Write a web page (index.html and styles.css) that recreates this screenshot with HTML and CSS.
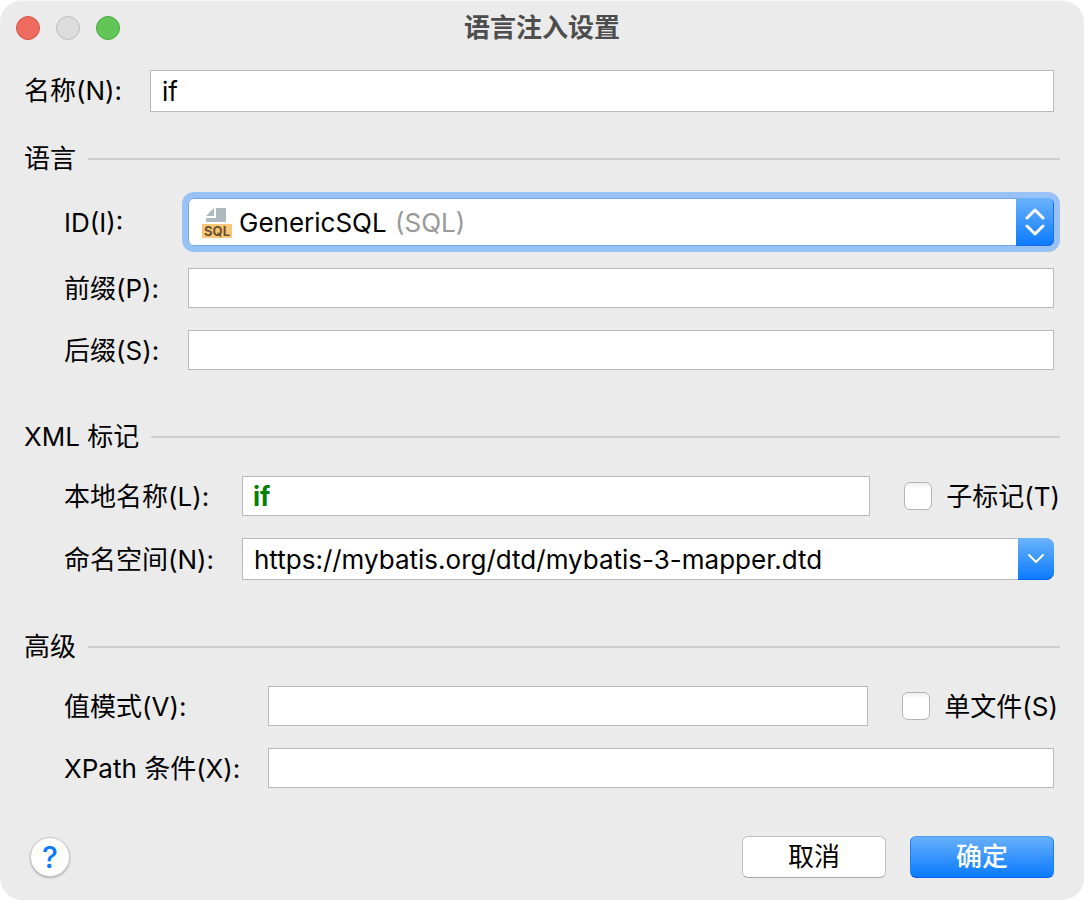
FILE: index.html
```html
<!DOCTYPE html>
<html lang="zh-CN">
    <head>
        <meta charset="utf-8" />
        <title>语言注入设置</title>
        <link rel="stylesheet" href="styles.css">
    </head>
    <body>
        <form class="dialog">
            <header class="titlebar">
                <div class="lights">
                    <span class="light close"></span>
                    <span class="light minimize"></span>
                    <span class="light maximize"></span>
                </div>
                <h1 class="title">语言注入设置</h1>
            </header>

            <div class="row name-row">
                <label for="name">名称(N):</label>
                <input class="field tall" id="name" type="text" value="if">
            </div>

            <section class="group language">
                <h2 class="heading">语言</h2>
                <div class="row">
                    <label for="language">ID(I):</label>
                    <div class="select-box">
                        <svg class="sql-icon" viewBox="0 0 30 32" aria-hidden="true">
                            <path d="M4 9 L12 1 V9 Z M14 1 H24 V15 H4 V11 H14 Z" fill="#aeb9c0"/>
                            <rect y="17" width="30" height="14" fill="#f9c778"/>
                            <text class="sql-text" x="15" y="29" text-anchor="middle">SQL</text>
                        </svg>
                        <select class="select" id="language">
                            <option>GenericSQL</option>
                        </select>
                        <span class="hint">(SQL)</span>
                        <span class="arrow">
                            <svg width="20" height="28" viewBox="0 0 20 28">
                                <path d="M2 10 L10 2 L18 10 M2 18 L10 26 L18 18"/>
                            </svg>
                        </span>
                    </div>
                </div>
                <div class="row">
                    <label for="prefix">前缀(P):</label>
                    <input class="field" id="prefix" type="text">
                </div>
                <div class="row">
                    <label for="suffix">后缀(S):</label>
                    <input class="field" id="suffix" type="text">
                </div>
            </section>

            <section class="group xml">
                <h2 class="heading">XML 标记</h2>
                <div class="row with-check">
                    <label for="local">本地名称(L):</label>
                    <input class="field pattern" id="local" type="text" value="if">
                    <input class="check" id="subtags" type="checkbox">
                    <label class="check-label" for="subtags">子标记(T)</label>
                </div>
                <div class="row">
                    <label for="namespace">命名空间(N):</label>
                    <div class="combo">
                        <input class="field tall" id="namespace" type="text" value="https://mybatis.org/dtd/mybatis-3-mapper.dtd">
                        <button class="combo-button" type="button" aria-label="命名空间">
                            <svg width="16" height="10" viewBox="0 0 16 10">
                                <path d="M1 1 L8 8 L15 1"/>
                            </svg>
                        </button>
                    </div>
                </div>
            </section>

            <section class="group advanced">
                <h2 class="heading">高级</h2>
                <div class="row with-check">
                    <label for="value">值模式(V):</label>
                    <input class="field" id="value" type="text">
                    <input class="check" id="single" type="checkbox">
                    <label class="check-label" for="single">单文件(S)</label>
                </div>
                <div class="row">
                    <label for="xpath">XPath 条件(X):</label>
                    <input class="field" id="xpath" type="text">
                </div>
            </section>

            <footer class="footer">
                <button class="help" type="button">?</button>
                <button class="button" type="button">取消</button>
                <button class="button primary" type="submit">确定</button>
            </footer>
        </form>
    </body>
</html>
```
FILE: styles.css
```css
* {
    box-sizing: border-box;
}

body {
    margin: 0;
    background: #fff;
}

body, input, select, button {
    font-family: Inter, "Noto Sans CJK SC", sans-serif;
    font-size: 26px;
    line-height: 32px;
    color: #000;
}

.dialog {
    min-height: 100vh;
    padding-bottom: 22px;
    background: #ebebeb;
    border-radius: 22px;
    box-shadow: inset 0 1px 0 #f8f8f8;
}

/* title bar */
.titlebar {
    display: grid;
    grid-template-columns: 1fr auto 1fr;
    align-items: center;
    height: 56px;
    padding: 0 16px;
}

.lights {
    display: flex;
    gap: 16px;
}

.light {
    width: 24px;
    height: 24px;
    border: 1px solid #bdbdbd;
    border-radius: 50%;
    background: #dcdcdc;
}

.close {
    border-color: #d65448;
    background: #ed6b5f;
}

.maximize {
    border-color: #4ba73d;
    background: #62c656;
}

.title {
    margin: 0;
    font-size: 26px;
    font-weight: 700;
    color: #4d4d4d;
}

/* rows */
.row {
    display: flex;
    align-items: center;
    padding: 0 30px 0 64px;
}

.row > label:first-child {
    flex: none;
    white-space: nowrap;
}

.group label {
    padding-top: 2px;
}

.name-row {
    margin-top: 14px;
    padding-left: 24px;
}

.name-row > label:first-child {
    width: 126px;
}

.language .row > label:first-child {
    width: 124px;
}

.xml .row > label:first-child {
    width: 178px;
}

.advanced .row > label:first-child {
    width: 204px;
}

.with-check {
    padding-right: 24px;
}

.advanced .with-check {
    padding-right: 26px;
}

.group {
    display: flex;
    flex-direction: column;
    gap: 22px;
    margin-top: 51px;
}

.language {
    margin-top: 31px;
}

.heading {
    display: flex;
    align-items: center;
    gap: 12px;
    margin: 0 0 1px;
    padding: 0 24px;
    font-size: 26px;
    font-weight: 400;
}

.heading::after {
    content: "";
    flex: 1;
    height: 2px;
    background: #cecece;
}

/* text fields */
.field {
    flex: 1;
    min-width: 0;
    height: 40px;
    padding: 0 10px;
    border: 1px solid #b9b9b9;
    border-radius: 0;
    outline: none;
    background: #fff;
}

.tall {
    height: 42px;
    padding: 0 11px;
}

.pattern {
    font-weight: 700;
    color: #008000;
}

/* language drop-down */
.select-box {
    position: relative;
    flex: 1;
    height: 48px;
    border-radius: 6px;
    box-shadow: 0 0 0 6px #98c2f5;
}

.select {
    appearance: none;
    width: 100%;
    height: 48px;
    padding: 2px 50px 0;
    border: 1px solid #72a9e6;
    border-radius: 6px;
    outline: none;
    background: #fff;
}

.sql-icon {
    position: absolute;
    top: 9px;
    left: 14px;
    width: 30px;
    height: 32px;
    pointer-events: none;
}

.sql-text {
    font-family: Inter, sans-serif;
    font-size: 13px;
    font-weight: 700;
    fill: #6a5230;
}

.hint {
    position: absolute;
    top: 9px;
    left: 207px;
    color: #999;
    pointer-events: none;
}

.arrow {
    position: absolute;
    top: 0;
    right: 0;
    display: flex;
    align-items: center;
    justify-content: center;
    width: 38px;
    height: 48px;
    border-radius: 0 6px 6px 0;
    background: linear-gradient(#6bb3fa, #0a7aff);
    box-shadow: inset -1px -1px 0 #1a6fec;
    pointer-events: none;
}

.arrow path, .combo-button path {
    fill: none;
    stroke: #fff;
    stroke-width: 3;
    stroke-linecap: round;
    stroke-linejoin: round;
}

/* namespace combo */
.combo {
    display: flex;
    flex: 1;
}

.combo .field {
    border-right: 0;
}

.combo-button {
    display: flex;
    align-items: center;
    justify-content: center;
    width: 36px;
    padding: 0;
    border: 0;
    border-radius: 0 8px 8px 0;
    background: linear-gradient(#6bb3fa, #0a7aff);
    box-shadow: inset 0 -1px 0 #0a62f5;
}

.combo-button path {
    stroke-width: 2;
}

/* check boxes */
.check {
    appearance: none;
    flex: none;
    width: 28px;
    height: 28px;
    margin: 0 14px 0 34px;
    border: 1px solid #b4b4b4;
    border-radius: 6px;
    background: linear-gradient(#f0f0f0, #fff 6px);
}

.check-label {
    white-space: nowrap;
}

/* buttons */
.footer {
    display: flex;
    align-items: center;
    gap: 24px;
    margin-top: 48px;
    padding: 0 30px;
}

.button {
    width: 144px;
    height: 42px;
    padding: 0;
    border: 1px solid #c0c0c0;
    border-bottom-color: #a9a9a9;
    border-radius: 6px;
    background: #fff;
}

.primary {
    border-color: #4b9bf8 #1c7df8 #0a60f0;
    background: linear-gradient(#67b0fb, #0a7aff);
    font-weight: 500;
    color: #fff;
}

.help {
    width: 40px;
    height: 40px;
    margin-right: auto;
    padding: 0;
    border: 1px solid #c9c9c9;
    border-radius: 50%;
    background: #fff;
    box-shadow: 0 1px 2px #b0b0b0;
    font-size: 30px;
    font-weight: 500;
    color: #0a7aff;
}
```
